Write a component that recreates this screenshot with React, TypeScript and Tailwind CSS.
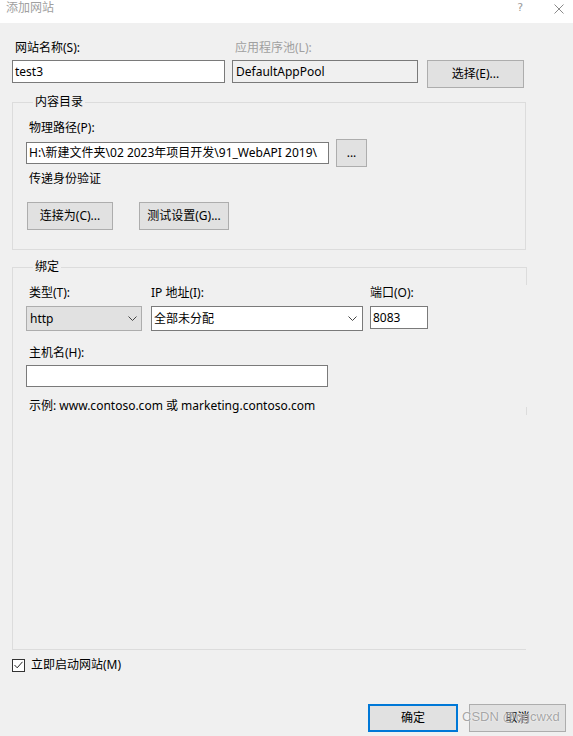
import type { ReactNode } from "react";

const FONT = "font-['Noto_Sans','Noto_Sans_CJK_SC',sans-serif]";

function Chevron() {
  return (
    <svg width="9" height="5" viewBox="0 0 9 5" className="shrink-0">
      <polyline points="0.5,0.5 4.5,4.5 8.5,0.5" fill="none" stroke="#444" strokeWidth="1" />
    </svg>
  );
}

function Button({ width, children, primary }: { width: string; children: ReactNode; primary?: boolean }) {
  return (
    <button
      type="button"
      className={`${width} h-[28px] shrink-0 bg-[#e1e1e1] text-[12px] leading-[16px] text-black flex items-center justify-center ${
        primary ? "border-2 border-[#0078d7]" : "border border-[#adadad]"
      }`}
    >
      {children}
    </button>
  );
}

function Label({ children, indent = true, muted }: { children: ReactNode; indent?: boolean; muted?: boolean }) {
  return (
    <div className={`leading-[16px] whitespace-nowrap ${indent ? "pl-[3px]" : ""} ${muted ? "text-[#a0a0a0]" : "text-black"}`}>
      {children}
    </div>
  );
}

export default function App() {
  return (
    <div className={`${FONT} w-[573px] h-[736px] bg-[#f0f0f0] text-[12px] text-black flex flex-col overflow-hidden`}>
      {/* title bar */}
      <div className="h-[23px] bg-white flex items-start shrink-0">
        <span className="ml-[6px] leading-[16px] text-[#a0a0a0]">添加网站</span>
        <span className="ml-auto leading-[16px] text-[#9a9a9a] font-['DejaVu_Sans',sans-serif] text-[11px]">?</span>
        <svg width="10" height="10" viewBox="0 0 10 10" className="ml-[31px] mr-[9px] mt-[4px]">
          <path d="M0.5 0.5 L9.5 9.5 M9.5 0.5 L0.5 9.5" stroke="#8a8a8a" strokeWidth="1" />
        </svg>
      </div>

      <div className="px-[12px] flex flex-col">
        {/* site name / app pool */}
        <div className="flex mt-[17px]">
          <div className="w-[213px] flex flex-col">
            <Label>网站名称(S):</Label>
            <div className="mt-[4px] h-[23px] bg-white border border-[#7a7a7a] pl-[2px] flex items-center">test3</div>
          </div>
          <div className="w-[186px] ml-[7px] flex flex-col">
            <Label muted>应用程序池(L):</Label>
            <div className="mt-[4px] h-[23px] bg-[#f0f0f0] border border-[#7a7a7a] pl-[3px] flex items-center">
              DefaultAppPool
            </div>
          </div>
          <div className="ml-[9px] pt-[20px]">
            <Button width="w-[97px]">选择(E)...</Button>
          </div>
        </div>

        {/* content directory */}
        <fieldset className="mt-[6px] w-[514px] border border-[#dcdcdc] pl-[13px] pt-[10px] pb-[19px]">
          <legend className="ml-[7px] px-[2px] leading-[16px]">内容目录</legend>
          <Label>物理路径(P):</Label>
          <div className="mt-[3px] flex items-center">
            <div className="w-[303px] h-[22px] bg-white border border-[#7a7a7a] pl-[2px] flex items-center overflow-hidden">
              <span className="block w-[296px] overflow-hidden whitespace-nowrap">
                H:\新建文件夹\02 2023年项目开发\91_WebAPI 2019\
              </span>
            </div>
            <div className="ml-[7px]">
              <Button width="w-[31px]">...</Button>
            </div>
          </div>
          <div className="mt-[4px]">
            <Label>传递身份验证</Label>
          </div>
          <div className="mt-[15px] ml-[1px] flex gap-[26px]">
            <Button width="w-[86px]">连接为(C)...</Button>
            <Button width="w-[90px]">测试设置(G)...</Button>
          </div>
        </fieldset>

        {/* bindings */}
        <fieldset className="relative mt-[9px] w-[514px] h-[391px] border border-r-0 border-[#dcdcdc] pl-[13px] pt-[10px]">
          <legend className="ml-[7px] px-[2px] leading-[16px]">绑定</legend>
          <span className="absolute right-[-1px] top-[-8px] w-px h-[18px] bg-[#dcdcdc]" />
          <span className="absolute right-[-1px] bottom-[-1px] w-px h-[8px] bg-[#dcdcdc]" />
          <div className="flex">
            <div className="w-[116px] flex flex-col">
              <Label>类型(T):</Label>
              <div className="mt-[5px] h-[25px] bg-[#e1e1e1] border border-[#adadad] pl-[3px] pr-[4px] flex items-center justify-between">
                <span>http</span>
                <Chevron />
              </div>
            </div>
            <div className="w-[212px] ml-[9px] flex flex-col">
              <Label indent={false}>IP 地址(I):</Label>
              <div className="mt-[5px] h-[25px] bg-white border border-[#7a7a7a] pl-[2px] pr-[5px] flex items-center justify-between">
                <span>全部未分配</span>
                <Chevron />
              </div>
            </div>
            <div className="w-[58px] ml-[7px] flex flex-col">
              <Label indent={false}>端口(O):</Label>
              <div className="mt-[5px] h-[23px] bg-white border border-[#7a7a7a] pl-[2px] flex items-center">8083</div>
            </div>
          </div>
          <div className="mt-[14px]">
            <Label>主机名(H):</Label>
          </div>
          <div className="mt-[4px] w-[302px] h-[22px] bg-white border border-[#7a7a7a]" />
          <div className="mt-[11px]">
            <Label>示例: www.contoso.com 或 marketing.contoso.com</Label>
          </div>
        </fieldset>

        {/* start immediately */}
        <div className="mt-[7px] flex items-center h-[16px]">
          <span className="w-[13px] h-[13px] bg-white border border-[#333] flex items-center justify-center">
            <svg width="9" height="8" viewBox="0 0 9 8">
              <polyline points="0.5,4 3.2,6.8 8.5,0.8" fill="none" stroke="#222" strokeWidth="1" />
            </svg>
          </span>
          <span className="ml-[6px] leading-[16px]">立即启动网站(M)</span>
        </div>
      </div>

      {/* dialog buttons */}
      <div className="relative mt-[31px] pr-[7px] flex justify-end gap-[11px]">
        <Button width="w-[90px]" primary>确定</Button>
        <Button width="w-[97px]">取消</Button>
        <span className="absolute left-[462px] top-[5px] font-['Liberation_Sans',sans-serif] text-[13px] leading-[16px] text-[#9c9c9c]/90 whitespace-nowrap pointer-events-none [text-shadow:0_0_2px_#fff]">
          CSDN @qgcwxd
        </span>
      </div>
    </div>
  );
}
